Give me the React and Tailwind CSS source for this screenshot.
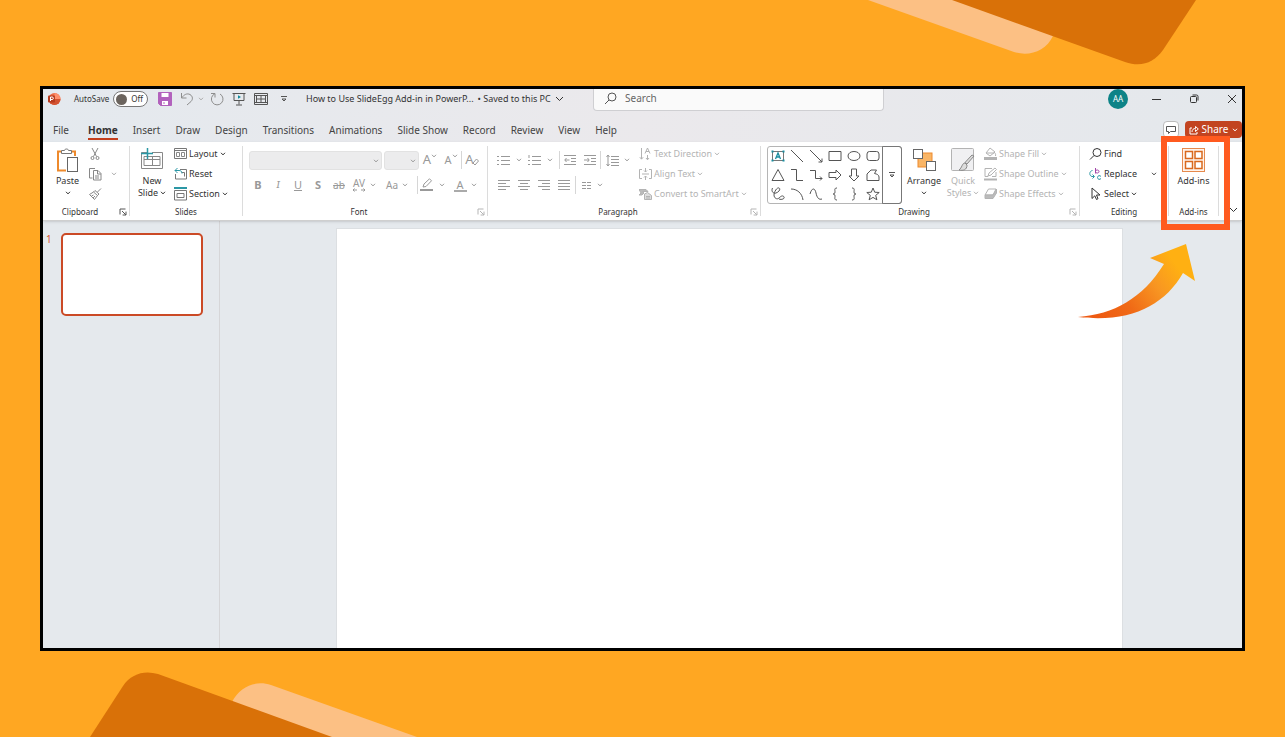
import React from 'react';
import clsx from 'clsx';

const TABS = [
  'File',
  'Home',
  'Insert',
  'Draw',
  'Design',
  'Transitions',
  'Animations',
  'Slide Show',
  'Record',
  'Review',
  'View',
  'Help',
];

const Svg = ({ w = 14, h = 14, className, children }) => (
  <svg
    width={w}
    height={h}
    viewBox={`0 0 ${w} ${h}`}
    fill="none"
    stroke="currentColor"
    strokeWidth="1"
    className={clsx('shrink-0', className)}
    aria-hidden="true"
  >
    {children}
  </svg>
);

const Caret = ({ className }) => (
  <Svg w={6} h={4} className={className}>
    <path d="M1 .8 3 2.9 5 .8" />
  </Svg>
);

const Separator = () => <div className="my-1 w-px shrink-0 bg-[#dcdcdc]" />;

const Divider = () => <div className="h-[18px] w-px shrink-0 bg-[#d6d6d6]" />;

const Launcher = ({ label, muted }) => (
  <button
    type="button"
    aria-label={label}
    className={clsx('absolute right-[2px] top-1', muted ? 'text-[#b5b5b5]' : 'text-[#555]')}
  >
    <Svg w={8} h={8}>
      <path d="M1 6.5V1h5.5M3 3l4 4M7 3.6V7H3.6" />
    </Svg>
  </button>
);

const Group = ({ name, launcher, muted, className, children }) => (
  <section aria-label={name} className={clsx('relative flex shrink-0 flex-col pt-[2px]', className)}>
    <div className="flex h-[60px]">{children}</div>
    <div className={clsx('relative h-4 text-center text-[8px] leading-4 text-[#333]', launcher && 'pr-3')}>
      {name}
      {launcher && <Launcher label={`${name} settings`} muted={muted} />}
    </div>
  </section>
);

const Cell = ({ label, className, children }) => (
  <button
    type="button"
    aria-label={label}
    className={clsx('flex h-5 shrink-0 items-center justify-center', className)}
  >
    {children}
  </button>
);

// one line of a stacked command list: icon, text, optional caret
const Command = ({ icon, label, caret, muted }) => (
  <button
    type="button"
    className={clsx(
      'flex h-5 items-center gap-[2px] whitespace-nowrap text-[9px]',
      muted ? 'text-[#b3b3b3]' : 'text-[#333]'
    )}
  >
    {icon}
    <span>{label}</span>
    {caret && <Caret />}
  </button>
);

/* ---------- title bar ---------- */

const AppLogo = () => (
  <svg width="14" height="14" viewBox="0 0 14 14" className="shrink-0" aria-hidden="true">
    <circle cx="7.5" cy="7" r="6" fill="#ed6c47" />
    <path d="M7.5 1a6 6 0 0 1 6 6h-6z" fill="#ff8f6b" />
    <path d="M1.5 7h12a6 6 0 0 1-12 0z" fill="#d35230" />
    <rect x="1" y="3.500" width="7" height="7" rx="1" fill="#b83b1d" />
    <path d="M3.500 9V5h1.600a1.200 1.200 0 0 1 0 2.500H3.500" fill="none" stroke="#fff" />
  </svg>
);

const TitleBar = () => (
  <header className="flex h-[22px] items-start text-[#555]">
    <div className="flex h-5 items-center">
      <div className="w-[31px] pl-1">
        <AppLogo />
      </div>
      <label className="flex w-[84px] items-center gap-1 text-[8px] text-[#333]">
        AutoSave
        <input type="checkbox" className="sr-only" />
        <span className="flex h-4 w-[35px] items-center gap-1 rounded-full border border-[#777] bg-white px-[2px]">
          <span className="h-[11px] w-[11px] rounded-full bg-[#6b645e]" />
          Off
        </span>
      </label>
      <Cell label="Save" className="w-[14px] text-[#b262bd]">
        <Svg>
          <path d="M.5.500h13v13h-11l-2-2z" fill="#b262bd" />
          <path d="M3.500 1h7v4h-7zM4 9h6v4H4z" fill="#fff" stroke="none" />
          <path d="M5 11h2" />
        </Svg>
      </Cell>
      <Cell label="Undo" className="ml-2 w-[14px] text-[#8d8d8d]">
        <Svg>
          <path d="M1.500 1v5h5M1.800 5.800C4 2.500 7 1 10 2.500c3 1.800 3 5 1 7L7 13" />
        </Svg>
      </Cell>
      <Cell label="Undo history" className="ml-[3px] w-2 text-[#aaa]">
        <Caret />
      </Cell>
      <Cell label="Redo" className="ml-[5px] w-[14px] text-[#8d8d8d]">
        <Svg>
          <path d="M1 1.500h4v4M4.800 1.800a5.800 5.800 0 1 0 5.200.200" />
        </Svg>
      </Cell>
      <Cell label="Start from beginning" className="ml-2 w-[14px]">
        <Svg>
          <path d="M.5 1.500h13M2 1.500v7h10v-7M7 8.500v4M4 13h6" />
          <path d="M6 3.200v3.600L9 5z" fill="#0e8a9a" stroke="none" />
        </Svg>
      </Cell>
      <Cell label="Slide layout" className="ml-2 w-[14px]">
        <Svg>
          <path d="M.5 1.500h13v11H.5zM.5 3.500h13M.5 10.500h13M2.500 3.500v7M7 3.500v7M11.500 3.500v7M2.500 7h9" />
        </Svg>
      </Cell>
      <Cell label="Customize toolbar" className="ml-3 w-2">
        <Svg w={8} h={8}>
          <path d="M1 1.500h6M2 4l2 2 2-2z" />
        </Svg>
      </Cell>
      <button
        type="button"
        className="ml-[18px] flex w-[287px] items-center gap-1 whitespace-nowrap text-[9px] text-[#333]"
      >
        <span>How to Use SlideEgg Add-in in PowerP...</span>
        <span>• Saved to this PC</span>
        <Svg w={9} h={6}>
          <path d="M1 1l3.500 3.500L8 1" />
        </Svg>
      </button>
    </div>

    <label className="flex h-[22px] w-[291px] shrink-0 items-center gap-2 rounded-b border border-t-0 border-[#cfcfd2] bg-[#fafafa] px-[10px] pb-[2px]">
      <Svg w={13} h={13}>
        <circle cx="8" cy="5" r="4" />
        <path d="M5 8l-4 4" />
      </Svg>
      <input
        type="text"
        placeholder="Search"
        aria-label="Search"
        className="w-full bg-transparent text-[10px] outline-none placeholder:text-[#666]"
      />
    </label>

    <div className="ml-auto flex h-5 items-center">
      <button type="button" className="h-5 w-5 rounded-full bg-[#0d8387] text-[8px] text-white">
        AA
      </button>
      <Cell label="Minimize" className="ml-[18px] w-5 text-[#333]">
        <Svg w={9} h={9}>
          <path d="M0 4.500h9" />
        </Svg>
      </Cell>
      <Cell label="Restore" className="ml-[18px] w-5 text-[#333]">
        <Svg w={10} h={10}>
          <rect x="1.500" y="2.500" width="6" height="6" rx="1" />
          <path d="M3.500 1h4A1.500 1.500 0 0 1 9 2.500v4" />
        </Svg>
      </Cell>
      <Cell label="Close" className="ml-[18px] w-5 text-[#333]">
        <Svg w={10} h={10}>
          <path d="M1 1l8 8M9 1L1 9" />
        </Svg>
      </Cell>
    </div>
  </header>
);

/* ---------- tab row ---------- */

const TabRow = () => (
  <div className="flex h-[31px] items-end justify-between pl-[10px]">
    <nav className="flex gap-[15px] whitespace-nowrap text-[10px] text-[#444]">
      {TABS.map((tab) => (
        <button
          key={tab}
          type="button"
          className={clsx(
            'mb-[2px] h-[18px] border-b-2 leading-4',
            tab === 'Home' ? 'ml-1 border-[#c43e1c] font-bold text-[#333]' : 'border-transparent'
          )}
        >
          {tab}
        </button>
      ))}
    </nav>
    <div className="mb-1 flex items-center gap-[6px]">
      <button
        type="button"
        aria-label="Comments"
        className="flex h-[17px] w-4 items-center justify-center rounded-sm border border-[#bbb] bg-white text-[#555]"
      >
        <Svg w={10} h={10}>
          <path d="M.5 1.500h9v5h-5l-2 2v-2h-2z" />
        </Svg>
      </button>
      <button
        type="button"
        className="flex h-[17px] w-[57px] items-center justify-center gap-[3px] rounded-sm bg-[#c24420] text-[10px] text-white"
      >
        <Svg w={10} h={10}>
          <path d="M3 3H1v6h7V7M3 7c0-2.500 1.500-3.500 3.500-3.500V1.500L9.300 4 6.500 6.500v-2" />
        </Svg>
        Share
        <Caret className="ml-px" />
      </button>
    </div>
  </div>
);

/* ---------- ribbon groups ---------- */

const ClipboardGroup = () => (
  <Group name="Clipboard" launcher className="w-[86px]">
    <button
      type="button"
      className="ml-[11px] flex w-[27px] flex-col items-center pt-1 text-[9px] leading-3 text-[#333]"
    >
      <Svg w={24} h={26}>
        <path d="M5 3.500H2v19h8M15 3.500h4V8" stroke="#ee8a2c" strokeWidth="2" />
        <path d="M5.500 5.500v-3h3c0-2 4-2 4 0h3v3z" fill="#fff" stroke="#777" />
        <rect x="11.500" y="9.500" width="10" height="14" fill="#fff" stroke="#666" />
      </Svg>
      <span className="mt-px">Paste</span>
      <Caret className="mt-1" />
    </button>
    <div className="ml-[7px] flex w-[14px] flex-col text-[#888]">
      <Cell label="Cut">
        <Svg>
          <path d="M4 1l4.500 8.500M10 1L5.500 9.500" />
          <circle cx="4.500" cy="11" r="1.500" />
          <circle cx="9.500" cy="11" r="1.500" />
        </Svg>
      </Cell>
      <Cell label="Copy">
        <Svg>
          <path d="M4.500 11h-3V1.500H7" />
          <path d="M5.500 3.500h4.500l3 3v6.500H5.500zM9.500 3.500v3.500H13M7 9h4M7 11h4" />
        </Svg>
      </Cell>
      <Cell label="Format painter">
        <Svg>
          <path d="M13 1.500L9.500 5M7 3.500l4 3.500-1.500 1.500-4-3.500zM5.500 5L1.500 7.500l5 5L9.500 8.500M3.500 9l2-1M5 11l2-2" />
        </Svg>
      </Cell>
    </div>
    <Cell label="Copy options" className="ml-[6px] mt-5 w-3 text-[#aaa]">
      <Caret />
    </Cell>
  </Group>
);

const LayoutIcon = () => (
  <Svg w={13}>
    <path d="M.5 1.500h12v10H.500zM.5 3.500h12" stroke="#777" />
    <path d="M2.500 5.500h3v4h-3zM7.500 5.500h3v4h-3z" stroke="#888" />
  </Svg>
);

const ResetIcon = () => (
  <Svg w={13}>
    <path d="M6 2.500h6.500v9.500h-11V7M7.500 5.500h3v4" stroke="#777" />
    <path d="M1 3.500h4c2 0 3 1 3 3M3.500 1L1 3.500 3.500 6" stroke="#2b97a5" />
  </Svg>
);

const SectionIcon = () => (
  <Svg w={13}>
    <path d="M0 1h13" stroke="#2b97a5" strokeWidth="2" />
    <path d="M.5 3.500h12v9.500H.500zM3 6.500h7v4H3z" stroke="#777" />
  </Svg>
);

const SlidesGroup = () => (
  <Group name="Slides" className="w-[112px]">
    <button
      type="button"
      className="ml-[6px] flex w-8 flex-col items-center pt-[3px] text-[9px] leading-3 text-[#333]"
    >
      <Svg w={24} h={24}>
        <path d="M8 5.500H1.500v16h21v-16H12M4 9.500h16v9H4zM12.500 9.500v9M4 12.500h16" stroke="#888" />
        <path d="M7.500 1v11M1 6.500h12" stroke="#2b97a5" strokeWidth="1.500" />
      </Svg>
      <span className="mt-1">New</span>
      <span className="flex items-center gap-[2px]">
        Slide
        <Caret />
      </span>
    </button>
    <div className="ml-[6px] flex flex-col">
      <Command icon={<LayoutIcon />} label="Layout" caret />
      <Command icon={<ResetIcon />} label="Reset" />
      <Command icon={<SectionIcon />} label="Section" caret />
    </div>
  </Group>
);

const DropBox = ({ label, className }) => (
  <div className={clsx('relative h-[19px]', className)}>
    <select
      aria-label={label}
      className="h-full w-full appearance-none rounded-[3px] border border-[#e2e2e2] bg-[#ececed]"
    />
    <Caret className="absolute right-[3px] top-2" />
  </div>
);

const FontGroup = () => (
  <Group name="Font" launcher muted className="w-[244px]">
    <div className="ml-[5px] flex flex-col gap-[5px] pt-[6px] text-[#999]">
      <div className="flex h-5 items-center pl-px">
        <DropBox label="Font name" className="w-[133px]" />
        <DropBox label="Font size" className="ml-[2px] w-[35px]" />
        <Cell label="Grow font" className="w-[22px] text-[13px]">
          A
          <Caret className="mb-2" />
        </Cell>
        <Cell label="Shrink font" className="w-5 text-[11px]">
          A
          <Caret className="mb-2" />
        </Cell>
        <Divider />
        <Cell label="Clear formatting" className="w-5 text-[13px]">
          A
          <Svg w={7} h={8} className="-ml-[2px] mt-1">
            <path d="M1 5l3.500-4L6.500 3 3 7z" fill="#fff" />
          </Svg>
        </Cell>
      </div>
      <div className="flex h-5 items-center text-[11px]">
        <Cell label="Bold" className="w-5 font-bold">B</Cell>
        <Cell label="Italic" className="w-5 font-serif italic">I</Cell>
        <Cell label="Underline" className="w-5 underline">U</Cell>
        <Cell label="Shadow" className="w-5 font-bold">S</Cell>
        <Cell label="Strikethrough" className="w-[22px] text-[10px] line-through">ab</Cell>
        <Cell label="Character spacing" className="w-[18px] flex-col text-[10px] leading-[10px]">
          AV
          <Svg w={14} h={4}>
            <path d="M1 2h4M9 2h4M2.500.500L1 2l1.500 1.500M11.500.500L13 2l-1.500 1.500" />
          </Svg>
        </Cell>
        <Cell label="Spacing options" className="w-[10px]">
          <Caret />
        </Cell>
        <Cell label="Change case" className="ml-[5px] w-[18px] text-[10px]">Aa</Cell>
        <Cell label="Case options" className="w-2">
          <Caret />
        </Cell>
        <div className="ml-2">
          <Divider />
        </div>
        <Cell label="Highlight colour" className="w-[18px]">
          <Svg>
            <path d="M3 9l1-3L9.500.800l2 2L6 8.500z" />
            <path d="M0 12h13" strokeWidth="2" />
          </Svg>
        </Cell>
        <Cell label="Highlight options" className="w-3">
          <Caret />
        </Cell>
        <Cell label="Font colour" className="ml-[2px] w-5 flex-col text-[11px] leading-[11px]">
          A
          <span className="h-[2px] w-[13px] bg-[#aaa]" />
        </Cell>
        <Cell label="Font colour options" className="w-2">
          <Caret />
        </Cell>
      </div>
    </div>
  </Group>
);

const AlignIcon = ({ d }) => (
  <Svg w={13} h={13}>
    <path d={d} />
  </Svg>
);

const TextDirectionIcon = () => (
  <Svg w={13}>
    <path d="M2.500 1v11M.8 10.200l1.700 2 1.700-2M6 6.500L8.500 1 11 6.500M7 4.500h3M8.500 8v4.500M7 11l1.500 1.800L10 11" />
  </Svg>
);

const AlignTextIcon = () => (
  <Svg w={13}>
    <path d="M3 2.500H.500v9H3M10 2.500h2.500v9H10M3 7h7M6.500 1v4M6.500 9v4M5 3.500L6.500 5 8 3.500M5 10.500L6.500 9 8 10.500" />
  </Svg>
);

const SmartArtIcon = () => (
  <Svg w={13}>
    <path d="M0 2.500h7l2 2H3.500L5 6l-2 2H0l2-2z" fill="#bbb" />
    <path d="M5.500 7l3-1.500 4 3v4h-7zM7 9.500h4M7 11h4" fill="#ddd" />
  </Svg>
);

const ParagraphGroup = () => (
  <Group name="Paragraph" launcher muted className="w-[272px]">
    <div className="flex w-[151px] flex-col gap-[5px] pl-[5px] pt-[6px] text-[#999]">
      <div className="flex h-5 items-center">
        <Cell label="Bullets" className="w-5">
          <AlignIcon d="M0 2.500h2M0 6.500h2M0 10.500h2M4 2.500h9M4 6.500h9M4 10.500h9" />
        </Cell>
        <Cell label="Bullet options" className="w-[11px]">
          <Caret />
        </Cell>
        <Cell label="Numbering" className="w-5">
          <AlignIcon d="M1 1v3M0 6.500h2M0 10.500h2M4 2.500h9M4 6.500h9M4 10.500h9" />
        </Cell>
        <Cell label="Numbering options" className="w-3">
          <Caret />
        </Cell>
        <div className="ml-[3px]">
          <Divider />
        </div>
        <Cell label="Decrease indent" className="w-5">
          <AlignIcon d="M0 1.500h12M7 4.500h5M7 7.500h5M0 10.500h12M5.500 6H.800M2.500 4L.800 6l1.700 2" />
        </Cell>
        <Cell label="Increase indent" className="w-5">
          <AlignIcon d="M0 1.500h12M7 4.500h5M7 7.500h5M0 10.500h12M0 6h5M3.500 4l1.700 2-1.700 2" />
        </Cell>
        <Divider />
        <Cell label="Line spacing" className="w-[22px]">
          <AlignIcon d="M2 1v11M.500 3L2 1l1.500 2M.500 10L2 12l1.500-2M5 2.500h8M5 5.500h8M5 8.500h8M5 11.500h8" />
        </Cell>
        <Cell label="Line spacing options" className="w-2">
          <Caret />
        </Cell>
      </div>
      <div className="flex h-5 items-center">
        <Cell label="Align left" className="w-5">
          <AlignIcon d="M1 1.500h12M1 4.500h8M1 7.500h12M1 10.500h8" />
        </Cell>
        <Cell label="Align centre" className="w-5">
          <AlignIcon d="M1 1.500h12M3 4.500h8M1 7.500h12M3 10.500h8" />
        </Cell>
        <Cell label="Align right" className="w-5">
          <AlignIcon d="M1 1.500h12M5 4.500h8M1 7.500h12M5 10.500h8" />
        </Cell>
        <Cell label="Justify" className="w-5">
          <AlignIcon d="M1 1.500h12M1 4.500h12M1 7.500h12M1 10.500h12" />
        </Cell>
        <div className="ml-[2px]">
          <Divider />
        </div>
        <Cell label="Columns" className="w-5">
          <AlignIcon d="M2 3.500h4M7 3.500h4M2 6.500h4M7 6.500h4M2 9.500h4M7 9.500h4" />
        </Cell>
        <Cell label="Column options" className="w-2">
          <Caret />
        </Cell>
      </div>
    </div>
    <div className="flex flex-col">
      <Command icon={<TextDirectionIcon />} label="Text Direction" caret muted />
      <Command icon={<AlignTextIcon />} label="Align Text" caret muted />
      <Command icon={<SmartArtIcon />} label="Convert to SmartArt" caret muted />
    </div>
  </Group>
);

const SHAPES = [
  ['Line', 'M1 1l12 12'],
  ['Arrow line', 'M1 1l12 12M13 9.500V13H9.500'],
  ['Rectangle', 'M1 2.500h12v9H1z'],
  ['Oval', 'M1 7c0-6 12-6 12 0s-12 6-12 0z'],
  ['Rounded rectangle', 'M3.500 2.500h7a2.500 2.500 0 0 1 2.500 2.500v4a2.500 2.500 0 0 1-2.500 2.500h-7A2.500 2.500 0 0 1 1 9V5a2.500 2.500 0 0 1 2.500-2.500z'],
  ['Triangle', 'M7 1.500l6 11H1z'],
  ['Elbow connector', 'M1 1.500h5.500v11H13'],
  ['Elbow arrow', 'M1 2.500h5.500v8H13M11 8.500l2 2-2 2'],
  ['Right arrow', 'M1 4.500h7V2l5 5-5 5V9.500H1z'],
  ['Down arrow', 'M4.500 1h5v7H12l-5 5-5-5h2.500z'],
  ['Freeform', 'M1 12.500V6l4-4h5.500L8.500 5.500C11 6 13 7 13 9v3.500z'],
  ['Scribble', 'M1.500 1C0 4 2 7 5 6s5-4 3-5-5 4-5 7 3 5 5 3 4-3 5-1-3 3-5 2'],
  ['Arc', 'M1 2c6 0 11 4 12 11'],
  ['Curve', 'M1 7c2-7 5-6 6-1s3 7 6 6'],
  ['Left brace', 'M9 1C6 1 7 3 7 5S5.500 7 5 7c.5 0 2 0 2 2s-1 4 2 4'],
  ['Right brace', 'M5 1c3 0 2 2 2 4s1.500 2 2 2c-.5 0-2 0-2 2s1 4-2 4'],
  ['Star', 'M7 1l1.700 4.200 4.500.300-3.500 2.900 1.200 4.400L7 10.400l-3.900 2.400 1.200-4.400L.800 5.500l4.500-.300z'],
];

const ShapeGallery = () => (
  <div className="mt-[2px] flex h-[58px] w-[135px] shrink-0 rounded-[3px] border border-[#b5b5b5]">
    <div className="grid flex-1 grid-cols-6 grid-rows-3 text-[#555]">
      <button type="button" aria-label="Text box" className="flex items-center justify-center">
        <Svg>
          <path d="M1.500 2.500h11v9h-11z" stroke="#777" />
          <path d="M4.500 10L7 4l2.500 6M5.500 8h3" stroke="#1b8ea0" strokeWidth="1.300" />
          <path d="M.5 1.500h2v2h-2zM11.500 1.500h2v2h-2zM.5 10.500h2v2h-2zM11.500 10.500h2v2h-2z" fill="#1b8ea0" stroke="none" />
        </Svg>
      </button>
      {SHAPES.map(([name, d]) => (
        <button key={name} type="button" aria-label={name} className="flex items-center justify-center">
          <Svg>
            <path d={d} />
          </Svg>
        </button>
      ))}
    </div>
    <button
      type="button"
      aria-label="More shapes"
      className="-my-px -mr-px flex w-5 items-center justify-center rounded-r-[3px] border border-[#777] text-[#555]"
    >
      <Svg w={6} h={6}>
        <path d="M0 .5h6M1 3l2 2 2-2z" />
      </Svg>
    </button>
  </div>
);

const FillIcon = () => (
  <Svg w={13}>
    <path d="M6 1L2 6l4 3 5-4zM3 6h7M10 5c1 1 2 2 1.500 4" />
    <path d="M0 11.500h13" strokeWidth="3" />
  </Svg>
);

const OutlineIcon = () => (
  <Svg w={13}>
    <path d="M8 1.500H1v8h3M4 9l1-3 6-5 1.500 1.500L7 8zM12 5v4.500H8" />
    <path d="M0 12.500h13" strokeWidth="2" />
  </Svg>
);

const EffectsIcon = () => (
  <Svg w={13}>
    <path d="M4.500 2h7.500L9 8H1z" />
    <path d="M1 8v3.500h8L12.500 6V2L9 8z" fill="#bbb" />
  </Svg>
);

const DrawingGroup = () => (
  <Group name="Drawing" launcher muted className="w-[318px]">
    <div className="ml-[6px] flex">
      <ShapeGallery />
      <button
        type="button"
        className="flex w-11 flex-col items-center pt-1 text-[9px] leading-3 text-[#333]"
      >
        <Svg w={24} h={24}>
          <rect x="6" y="5" width="14" height="14" fill="#f9b566" stroke="#ee8a2c" />
          <rect x="1.500" y="1.500" width="9" height="9" fill="#fff" stroke="#666" />
          <rect x="14.500" y="13.500" width="9" height="9" fill="#fff" stroke="#666" />
        </Svg>
        <span className="mt-[3px]">Arrange</span>
        <Caret className="mt-1" />
      </button>
      <button
        type="button"
        className="flex w-[34px] flex-col items-center pt-1 text-[9px] leading-3 text-[#b3b3b3]"
      >
        <Svg w={24} h={24}>
          <rect x=".5" y=".5" width="22" height="22" rx="1" fill="#f0f0f2" />
          <path d="M23 8l-7 8-2-1.500L21 7zM14 15c-3 0-3 5-6 7 4 1 8 0 8-5z" fill="#ddd" stroke="#888" />
        </Svg>
        <span className="mt-[3px]">Quick</span>
        <span className="flex items-center gap-[2px]">
          Styles
          <Caret />
        </span>
      </button>
      <div className="ml-1 flex flex-col">
        <Command icon={<FillIcon />} label="Shape Fill" caret muted />
        <Command icon={<OutlineIcon />} label="Shape Outline" caret muted />
        <Command icon={<EffectsIcon />} label="Shape Effects" caret muted />
      </div>
    </div>
  </Group>
);

const FindIcon = () => (
  <Svg w={13}>
    <circle cx="8" cy="5.500" r="4" />
    <path d="M5 8.500L1 12.500" />
  </Svg>
);

const ReplaceIcon = () => (
  <Svg w={13}>
    <path d="M6.500 1v5.500M6.500 4.500c0-2 3.500-2 3.500 0s-3.500 2-3.500 0" stroke="#a145a8" />
    <path d="M3.500 3.500C0 4 0 9 3 9.500h2M3.500 7.500l2 2-2 2M12 9.500c-1-1.500-3.500-1-3.500 1s2.500 2.500 3.500 1" stroke="#2b97a5" />
  </Svg>
);

const SelectIcon = () => (
  <Svg w={13}>
    <path d="M3 1v10.500l2.800-2.700L7.500 12.500l1.500-.8L7.500 8H11z" />
  </Svg>
);

const EditingGroup = () => (
  <Group name="Editing" className="w-[88px]">
    <div className="ml-[9px] flex flex-1 flex-col">
      <Command icon={<FindIcon />} label="Find" />
      <Command icon={<ReplaceIcon />} label="Replace" />
      <Command icon={<SelectIcon />} label="Select" caret />
    </div>
    <Cell label="Replace options" className="mr-[10px] mt-5 w-2 text-[#444]">
      <Caret />
    </Cell>
  </Group>
);

const AddInsGroup = () => (
  <Group name="Add-ins" className="w-[49px]">
    <button
      type="button"
      className="flex flex-1 flex-col items-center pt-1 text-[9px] leading-3 text-[#333]"
    >
      <Svg w={23} h={24}>
        <rect x=".5" y=".5" width="22" height="23" fill="#fff4ec" stroke="#e58a4e" />
        <path
          d="M3.500 3.500h7v7h-7zM13 3.500h7v7h-7zM3.500 13.500h7v7h-7zM13 13.500h7v7h-7z"
          fill="#fff"
          stroke="#d9691e"
          strokeWidth="1.500"
        />
      </Svg>
      <span className="mt-[3px]">Add-ins</span>
    </button>
    <div className="pointer-events-none absolute -left-2 -top-[6px] h-[94px] w-[69px] border-[6px] border-[#ff5a1f]" />
  </Group>
);

const Ribbon = () => (
  <div className="relative z-10 flex h-[79px] border-b border-[#cfcfcf] bg-white shadow-sm">
    <ClipboardGroup />
    <Separator />
    <SlidesGroup />
    <Separator />
    <FontGroup />
    <Separator />
    <ParagraphGroup />
    <Separator />
    <DrawingGroup />
    <Separator />
    <EditingGroup />
    <Separator />
    <AddInsGroup />
    <Separator />
    <button type="button" aria-label="Collapse ribbon" className="ml-auto self-end pb-1 pr-1 text-[#333]">
      <Svg w={9} h={12}>
        <path d="M1 4l3.500 3.500L8 4" />
      </Svg>
    </button>
  </div>
);

/* ---------- workspace ---------- */

const Arrow = () => (
  <svg
    width="122"
    height="80"
    viewBox="0 0 122 80"
    className="absolute right-11 top-[21px]"
    aria-hidden="true"
  >
    <defs>
      <linearGradient id="arrowFill" x1="20" y1="76" x2="112" y2="10" gradientUnits="userSpaceOnUse">
        <stop offset="0" stopColor="#ee5a12" />
        <stop offset=".3" stopColor="#f06a16" />
        <stop offset=".6" stopColor="#f89622" />
        <stop offset=".85" stopColor="#ffb012" />
      </linearGradient>
    </defs>
    <path
      d="M2 75C38 72 66 57 88 22L74 16 110 2 119 39 107 31C88 64 54 81 2 75Z"
      fill="url(#arrowFill)"
    />
  </svg>
);

const Workspace = () => (
  <main className="relative flex flex-1">
    <aside className="flex w-[177px] shrink-0 items-start gap-[10px] border-r border-[#d6d6d8] pl-[3px] pt-3">
      <span className="w-[5px] text-[10px] leading-3 text-[#d9532f]">1</span>
      <button
        type="button"
        aria-label="Slide 1"
        className="h-[83px] w-[142px] rounded-[5px] border-2 border-[#cb4a26] bg-white"
      />
    </aside>
    <div className="flex flex-1 pl-[116px] pr-[119px] pt-[7px]">
      <div className="flex-1 border-x border-t border-[#dcdfe2] bg-white" />
    </div>
    <Arrow />
  </main>
);

const CornerShapes = () => (
  <>
    <svg width="445" height="70" viewBox="0 0 445 70" className="absolute right-0 top-0" aria-hidden="true">
      <path d="M28 0L174 52C189 57 206 51 213 36L300 0Z" fill="#fcc084" />
      <path d="M112 0L285 62C302 68 314 62 323 50L356 0Z" fill="#d97108" />
    </svg>
    <svg width="445" height="70" viewBox="0 0 445 70" className="absolute bottom-0 left-0" aria-hidden="true">
      <path d="M417 70L271 18C256 13 240 19 232 35L145 70Z" fill="#fcc084" />
      <path d="M332 70L158 7C144 3 131 7 123 19L90 70Z" fill="#d97108" />
    </svg>
  </>
);

const App = () => (
  <div className="relative flex min-h-screen flex-col bg-[#ffa722] px-10 py-[86px] font-['Noto_Sans','Open_Sans',sans-serif]">
    <CornerShapes />
    <div className="relative flex flex-1 flex-col border-[3px] border-black bg-[#e5e9ed]">
      <div className="bg-linear-to-r from-[#e4e9ee] via-[#ebe9ec] to-[#e4e8ec]">
        <TitleBar />
        <TabRow />
      </div>
      <Ribbon />
      <Workspace />
    </div>
  </div>
);

export default App;
